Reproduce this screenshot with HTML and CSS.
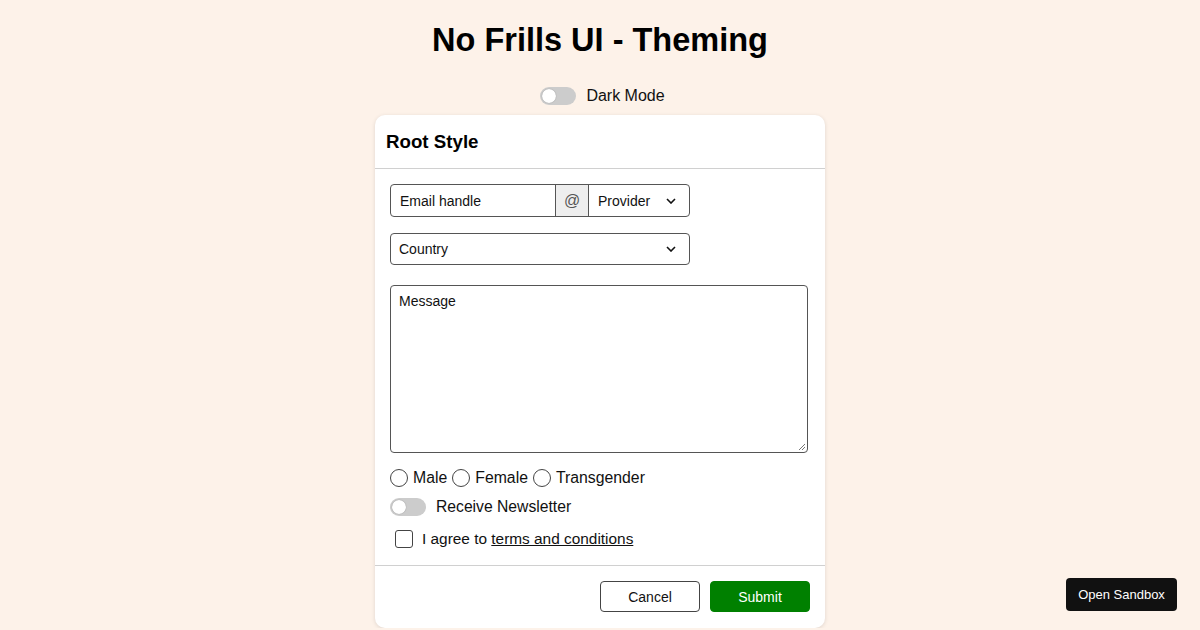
FILE: index.html
```html
<!DOCTYPE html>
<html lang="en">
<head>
    <meta charset="UTF-8">
    <title>No Frills UI - Theming</title>
    <link rel="stylesheet" href="styles.css">
</head>
<body>
    <h1 class="title">No Frills UI - Theming</h1>

    <div class="mode-row">
        <span class="toggle"><span class="knob"></span></span>
        <span>Dark Mode</span>
    </div>

    <div class="card">
        <div class="card-header">Root Style</div>
        <div class="card-body">
            <div class="input-group">
                <div class="field email">Email handle</div>
                <div class="addon">@</div>
                <div class="field select provider">
                    <span>Provider</span>
                    <svg width="10" height="6" viewBox="0 0 10 6"><path d="M1 1l4 4 4-4" fill="none" stroke="#111" stroke-width="1.6"/></svg>
                </div>
            </div>
            <div class="field select country">
                <span>Country</span>
                <svg width="10" height="6" viewBox="0 0 10 6"><path d="M1 1l4 4 4-4" fill="none" stroke="#111" stroke-width="1.6"/></svg>
            </div>
            <div class="textarea">
                <span>Message</span>
                <svg class="grip" width="8" height="8" viewBox="0 0 8 8"><path d="M7 1L1 7M7 4L4 7" stroke="#777" stroke-width="1"/></svg>
            </div>
            <div class="radios">
                <label class="radio"><span class="circle"></span>Male</label>
                <label class="radio"><span class="circle"></span>Female</label>
                <label class="radio"><span class="circle"></span>Transgender</label>
            </div>
            <div class="newsletter">
                <span class="toggle"><span class="knob"></span></span>
                <span>Receive Newsletter</span>
            </div>
            <div class="agree">
                <span class="checkbox"></span>
                <span>I agree to <a href="#">terms and conditions</a></span>
            </div>
        </div>
        <div class="card-footer">
            <button class="btn btn-outline">Cancel</button>
            <button class="btn btn-success">Submit</button>
        </div>
    </div>

    <button class="sandbox">Open Sandbox</button>
</body>
</html>
```

FILE: styles.css
```css
body {
    margin: 0;
    padding: 0;
    background-color: #fdf2e9;
    font-family: 'Liberation Sans', Arial, sans-serif;
    color: #111;
}
.title {
    margin: 0;
    padding-top: 22px;
    font-size: 32.5px;
    line-height: 37px;
    text-align: center;
    color: #000;
}
.mode-row {
    display: flex;
    justify-content: center;
    align-items: center;
    gap: 10px;
    margin-top: 27px;
    font-size: 16px;
    height: 20px;
    padding-left: 5px;
}
.toggle {
    display: inline-block;
    position: relative;
    width: 36px;
    height: 18px;
    border-radius: 9px;
    background-color: #cccccc;
}
.knob {
    position: absolute;
    left: 2px;
    top: 2px;
    width: 14px;
    height: 14px;
    border-radius: 50%;
    background-color: #fff;
    box-shadow: 0 0 1px rgba(0,0,0,0.4);
}
.card {
    width: 450px;
    margin: 9px auto 0;
    background-color: #fff;
    border-radius: 10px;
    box-shadow: 0 1px 4px rgba(0,0,0,0.12);
}
.card-header {
    height: 53px;
    line-height: 53px;
    padding: 0 11px;
    font-size: 18.72px;
    font-weight: bold;
    color: #000;
    border-bottom: 1px solid #d0d0d0;
}
.card-body {
    padding: 15px 17px 16px 15px;
    font-size: 14px;
}
.input-group {
    display: flex;
    width: 300px;
    height: 33px;
    border: 1px solid #555;
    border-radius: 4px;
    box-sizing: border-box;
    overflow: hidden;
}
.field {
    display: flex;
    align-items: center;
    padding: 0 9px;
    box-sizing: border-box;
}
.email {
    width: 164px;
}
.addon {
    width: 34px;
    box-sizing: border-box;
    display: flex;
    align-items: center;
    justify-content: center;
    background-color: #eeeeee;
    border-left: 1px solid #555;
    border-right: 1px solid #555;
    color: #555;
    font-size: 16px;
}
.select {
    justify-content: space-between;
}
.provider {
    flex: 1;
    padding-right: 13px;
}
.country {
    width: 300px;
    height: 32px;
    margin-top: 16px;
    border: 1px solid #555;
    border-radius: 4px;
    padding-left: 8px;
    padding-right: 13px;
}
.textarea {
    position: relative;
    height: 168px;
    margin-top: 20px;
    border: 1px solid #555;
    border-radius: 4px;
    box-sizing: border-box;
    padding: 7px 8px;
}
.grip {
    position: absolute;
    right: 1px;
    bottom: 1px;
}
.radios {
    display: flex;
    gap: 5px;
    margin-top: 15px;
    font-size: 15.8px;
    height: 20px;
    align-items: center;
}
.radio {
    display: flex;
    align-items: center;
    gap: 5px;
}
.circle {
    width: 16px;
    height: 16px;
    border: 1px solid #444;
    border-radius: 50%;
}
.newsletter {
    display: flex;
    align-items: center;
    gap: 10px;
    margin-top: 9px;
    font-size: 15.7px;
    height: 20px;
}
.agree {
    display: flex;
    align-items: center;
    gap: 9px;
    margin-top: 12px;
    padding-left: 5px;
    font-size: 15.4px;
    height: 20px;
}
.checkbox {
    width: 16px;
    height: 16px;
    border: 1px solid #444;
    border-radius: 3px;
}
.agree a {
    color: #111;
}
.card-footer {
    display: flex;
    justify-content: flex-end;
    gap: 10px;
    padding: 15px 15px 16px;
    border-top: 1px solid #d0d0d0;
}
.btn {
    width: 100px;
    height: 31px;
    border-radius: 4px;
    font-family: 'Liberation Sans', Arial, sans-serif;
    font-size: 14px;
    cursor: pointer;
}
.btn-outline {
    background-color: #fff;
    border: 1px solid #444;
    color: #111;
}
.btn-success {
    background-color: #008000;
    border: 1px solid #008000;
    color: #fff;
}
.sandbox {
    position: fixed;
    right: 23px;
    bottom: 19px;
    width: 111px;
    height: 33px;
    background-color: #111;
    color: #fff;
    border: none;
    border-radius: 4px;
    font-family: 'Liberation Sans', Arial, sans-serif;
    font-size: 13px;
}
```
